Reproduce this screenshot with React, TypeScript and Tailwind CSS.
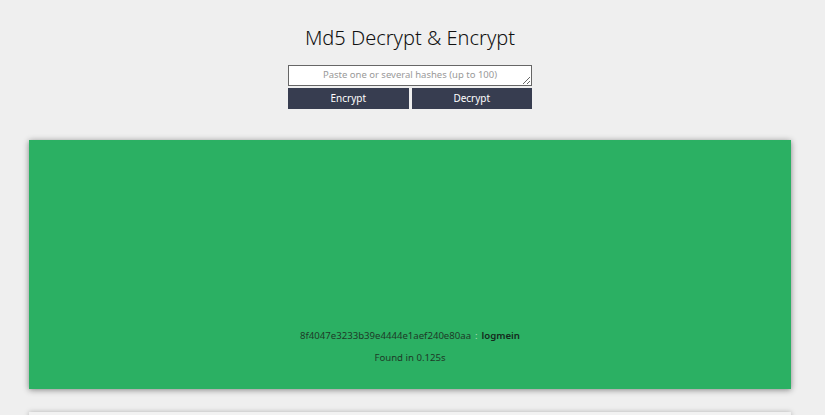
export default function App() {
  return (
    <div className="min-h-[415px] bg-[#efefef] font-['Noto_Sans',sans-serif] text-[#222] overflow-hidden">
      <div className="w-[820px]">
        <div className="flex flex-col items-center pt-[25px]">
          <h1 className="text-[20px] leading-[26px] font-light text-[#111]">
            Md5 Decrypt &amp; Encrypt
          </h1>
          <div className="mt-[14px] w-[244px]">
            <textarea
              className="block w-full h-[21px] resize-y bg-white border border-[#666] text-center text-[9.5px] leading-[17px] text-[#777] placeholder:text-[#999] outline-none overflow-hidden"
              placeholder="Paste one or several hashes (up to 100)"
              rows={1}
            />
            <div className="mt-[2px] flex gap-[3px]">
              <button className="flex-1 h-[21px] bg-[#373d50] text-white text-[10px]">
                Encrypt
              </button>
              <button className="flex-1 h-[21px] bg-[#373d50] text-white text-[10px]">
                Decrypt
              </button>
            </div>
          </div>
        </div>

        <div className="mx-[29px] mt-[31px] h-[249px] bg-[#2bb063] shadow-[0_1px_6px_rgba(0,0,0,0.45)] flex flex-col items-center justify-end pb-[24px] text-[9.6px] text-[#1e3a28]">
          <div className="flex items-center gap-[4px]">
            <span>8f4047e3233b39e4444e1aef240e80aa</span>
            <span className="text-[#b5dcc0]">:</span>
            <span className="font-semibold text-[#142a1c]">logmein</span>
          </div>
          <div className="mt-[7px]">Found in 0.125s</div>
        </div>

        <div className="mx-[29px] mt-[23px] h-[40px] bg-[#f2f2f2] shadow-[0_0_5px_rgba(0,0,0,0.25)]" />
      </div>
    </div>
  );
}
